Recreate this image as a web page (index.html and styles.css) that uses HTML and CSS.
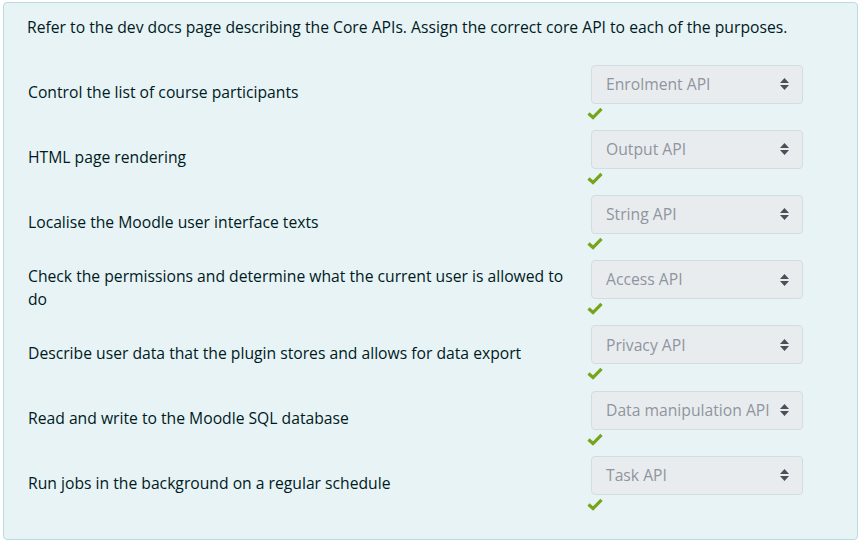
FILE: index.html
```html
<!DOCTYPE html>
<html>
<head>
<meta charset="utf-8">
<link rel="stylesheet" href="styles.css">
</head>
<body>
<div class="formulation">
  <p class="qtext">Refer to the dev docs page describing the Core APIs. Assign the correct core API to each of the purposes.</p>
  <div class="answers">
    <div class="row">
      <div class="label">Control the list of course participants</div>
      <div class="control"><div class="select"><span>Enrolment API</span><svg class="arrows" width="9" height="12" viewBox="0 0 9 12"><path d="M4.5 0 L9 5 H0 Z M0 7 H9 L4.5 12 Z" fill="#495057"/></svg></div><svg class="check" width="16" height="13" viewBox="0 0 16 13"><path d="M1.5 6.5 L6 10.5 L14.5 1.8" stroke="#76a41a" stroke-width="3.2" fill="none"/></svg></div>
    </div>
    <div class="row">
      <div class="label">HTML page rendering</div>
      <div class="control"><div class="select"><span>Output API</span><svg class="arrows" width="9" height="12" viewBox="0 0 9 12"><path d="M4.5 0 L9 5 H0 Z M0 7 H9 L4.5 12 Z" fill="#495057"/></svg></div><svg class="check" width="16" height="13" viewBox="0 0 16 13"><path d="M1.5 6.5 L6 10.5 L14.5 1.8" stroke="#76a41a" stroke-width="3.2" fill="none"/></svg></div>
    </div>
    <div class="row">
      <div class="label">Localise the Moodle user interface texts</div>
      <div class="control"><div class="select"><span>String API</span><svg class="arrows" width="9" height="12" viewBox="0 0 9 12"><path d="M4.5 0 L9 5 H0 Z M0 7 H9 L4.5 12 Z" fill="#495057"/></svg></div><svg class="check" width="16" height="13" viewBox="0 0 16 13"><path d="M1.5 6.5 L6 10.5 L14.5 1.8" stroke="#76a41a" stroke-width="3.2" fill="none"/></svg></div>
    </div>
    <div class="row">
      <div class="label">Check the permissions and determine what the current user is allowed to do</div>
      <div class="control"><div class="select"><span>Access API</span><svg class="arrows" width="9" height="12" viewBox="0 0 9 12"><path d="M4.5 0 L9 5 H0 Z M0 7 H9 L4.5 12 Z" fill="#495057"/></svg></div><svg class="check" width="16" height="13" viewBox="0 0 16 13"><path d="M1.5 6.5 L6 10.5 L14.5 1.8" stroke="#76a41a" stroke-width="3.2" fill="none"/></svg></div>
    </div>
    <div class="row">
      <div class="label">Describe user data that the plugin stores and allows for data export</div>
      <div class="control"><div class="select"><span>Privacy API</span><svg class="arrows" width="9" height="12" viewBox="0 0 9 12"><path d="M4.5 0 L9 5 H0 Z M0 7 H9 L4.5 12 Z" fill="#495057"/></svg></div><svg class="check" width="16" height="13" viewBox="0 0 16 13"><path d="M1.5 6.5 L6 10.5 L14.5 1.8" stroke="#76a41a" stroke-width="3.2" fill="none"/></svg></div>
    </div>
    <div class="row">
      <div class="label">Read and write to the Moodle SQL database</div>
      <div class="control"><div class="select"><span>Data manipulation API</span><svg class="arrows" width="9" height="12" viewBox="0 0 9 12"><path d="M4.5 0 L9 5 H0 Z M0 7 H9 L4.5 12 Z" fill="#495057"/></svg></div><svg class="check" width="16" height="13" viewBox="0 0 16 13"><path d="M1.5 6.5 L6 10.5 L14.5 1.8" stroke="#76a41a" stroke-width="3.2" fill="none"/></svg></div>
    </div>
    <div class="row">
      <div class="label">Run jobs in the background on a regular schedule</div>
      <div class="control"><div class="select"><span>Task API</span><svg class="arrows" width="9" height="12" viewBox="0 0 9 12"><path d="M4.5 0 L9 5 H0 Z M0 7 H9 L4.5 12 Z" fill="#495057"/></svg></div><svg class="check" width="16" height="13" viewBox="0 0 16 13"><path d="M1.5 6.5 L6 10.5 L14.5 1.8" stroke="#76a41a" stroke-width="3.2" fill="none"/></svg></div>
    </div>
  </div>
</div>
</body>
</html>
```
FILE: styles.css
```css
html, body {
  margin: 0;
  padding: 0;
  background: #ffffff;
}
body {
  font-family: "Open Sans", "Liberation Sans", sans-serif;
  font-size: 15.7px;
  line-height: 22.5px;
  color: #001a1e;
}
.formulation {
  margin: 2px 0 0 3px;
  width: 855px;
  height: 538px;
  box-sizing: border-box;
  border: 1px solid #b8dce2;
  border-radius: 4px;
  background: #e7f3f5;
  padding: 13px 20px 0 23px;
}
.qtext {
  margin: 0 0 21px 0;
}
.answers {
  display: flex;
  flex-direction: column;
}
.row {
  display: flex;
  align-items: center;
  height: 65.2px;
  box-sizing: border-box;
  padding-top: 0;
}
.label {
  width: 545px;
  padding-left: 1px;
  padding-right: 14px;
}
.control {
  display: flex;
  flex-direction: column;
  align-items: flex-start;
  padding-left: 4px;
}
.select {
  width: 212px;
  height: 39px;
  box-sizing: border-box;
  border: 1px solid #d3dce0;
  border-radius: 4px;
  background: #e9ecef;
  color: #8f959e;
  display: flex;
  align-items: center;
  justify-content: space-between;
  padding: 0 13px 0 14px;
  white-space: nowrap;
}
.arrows {
  display: block;
  flex: none;
}
.check {
  display: block;
  margin: 3px 0 0 -4px;
}
```
